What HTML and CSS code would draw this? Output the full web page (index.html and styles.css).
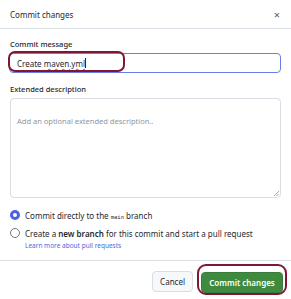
FILE: index.html
```html
<!DOCTYPE html>
<html>
<head>
<meta charset="utf-8">
<link rel="stylesheet" href="styles.css">
</head>
<body>
<div class="dialog">
  <div class="header">
    <span class="title">Commit changes</span>
    <span class="close">×</span>
  </div>
  <div class="content">
    <div class="label">Commit message</div>
    <div class="input-wrap">
      <div class="input">Create <span class="squiggle">maven.yml</span><span class="caret"></span></div>
      <div class="mark mark-input"></div>
    </div>
    <div class="label label-ext">Extended description</div>
    <div class="textarea">
      <span class="placeholder">Add an optional extended description..</span>
      <svg class="grip" width="6" height="6" viewBox="0 0 6 6"><path d="M1 6L6 1M3.5 6L6 3.5" stroke="#8c959f" stroke-width="0.8"/></svg>
    </div>
    <div class="radio-row first">
      <span class="radio on"></span>
      <span class="rtext">Commit directly to the <code>main</code> branch</span>
    </div>
    <div class="radio-row">
      <span class="radio"></span>
      <span class="rtext">Create a <b>new branch</b> for this commit and start a pull request</span>
    </div>
    <a class="learn">Learn more about pull requests</a>
  </div>
  <div class="footer">
    <button class="btn cancel">Cancel</button>
    <div class="commit-wrap">
      <button class="btn commit">Commit changes</button>
      <div class="mark mark-btn"></div>
    </div>
  </div>
</div>
</body>
</html>
```
FILE: styles.css
```css
html, body {
  margin: 0;
  padding: 0;
  background: #ffffff;
}
body {
  font-family: "Noto Sans", "Liberation Sans", sans-serif;
  color: #24292f;
  width: 291px;
  height: 299px;
  overflow: hidden;
}
.dialog {
  width: 291px;
}
.header {
  height: 29px;
  border-bottom: 1px solid #d8dee4;
  display: flex;
  align-items: center;
  justify-content: space-between;
  padding: 0 10px;
  box-sizing: border-box;
}
.title {
  font-size: 8px;
  color: #24292f;
}
.close {
  font-size: 11px;
  color: #57606a;
  margin-right: 1px;
}
.content {
  padding: 10px 10px 0 9px;
}
.label {
  font-size: 7.5px;
  font-weight: 500;
  line-height: 11px;
  margin-left: 1px;
  margin-bottom: 3px;
}
.label-ext {
  margin-top: 11px;
  margin-bottom: 3px;
}
.input-wrap {
  position: relative;
}
.input {
  height: 20px;
  border: 1.5px solid #6e7de6;
  border-radius: 4px;
  box-sizing: border-box;
  font-size: 8px;
  line-height: 17px;
  padding-left: 7px;
  display: flex;
  align-items: center;
  white-space: pre;
}
.squiggle {
  text-decoration: underline wavy #e04848;
  text-decoration-thickness: 0.7px;
  text-underline-offset: 1px;
}
.caret {
  display: inline-block;
  width: 1px;
  height: 10px;
  background: #24292f;
}
.mark {
  position: absolute;
  border: 2.5px solid #7f1632;
  border-radius: 7px;
  box-sizing: border-box;
}
.mark-input {
  left: -1px;
  top: -2px;
  width: 117px;
  height: 21px;
}
.textarea {
  position: relative;
  margin-left: 1px;
  height: 100px;
  border: 1px solid #d8dee4;
  border-radius: 4px;
  box-sizing: border-box;
  padding: 8px 6px;
}
.placeholder {
  font-size: 7.5px;
  color: #8c959f;
}
.grip {
  position: absolute;
  right: 1px;
  bottom: 1px;
}
.radio-row {
  display: flex;
  align-items: center;
  height: 18px;
  margin-left: 1px;
}
.radio-row.first {
  margin-top: 8px;
}
.radio {
  width: 10px;
  height: 10px;
  border-radius: 50%;
  border: 1px solid #6e7781;
  box-sizing: border-box;
  margin-right: 5px;
  flex: none;
}
.radio.on {
  border: 3px solid #4f62e0;
}
.rtext {
  font-size: 8px;
  color: #24292f;
}
.rtext b {
  font-weight: 600;
}
code {
  font-family: "DejaVu Sans Mono", monospace;
  font-size: 5.5px;
}
.learn {
  display: block;
  margin-left: 16px;
  margin-top: -1px;
  line-height: 9px;
  font-size: 6.5px;
  color: #4a6cdc;
}
.footer {
  margin-top: 10px;
  border-top: 1px solid #d8dee4;
  display: flex;
  justify-content: flex-end;
  align-items: center;
  gap: 8px;
  padding: 8px 8px 0 0;
}
.btn {
  font-family: "Noto Sans", "Liberation Sans", sans-serif;
  font-size: 8px;
  height: 21px;
  border-radius: 4px;
  box-sizing: border-box;
  padding: 0 7px;
}
.cancel {
  background: #f6f8fa;
  border: 1px solid #d8dee4;
  color: #24292f;
}
.commit-wrap {
  position: relative;
}
.commit {
  background: #3e8a3f;
  border: 1px solid #3a7d3b;
  color: #ffffff;
  font-weight: 600;
  width: 82px;
}
.mark-btn {
  left: -4px;
  top: -5px;
  width: 90px;
  height: 31px;
  border-radius: 9px;
}
```
